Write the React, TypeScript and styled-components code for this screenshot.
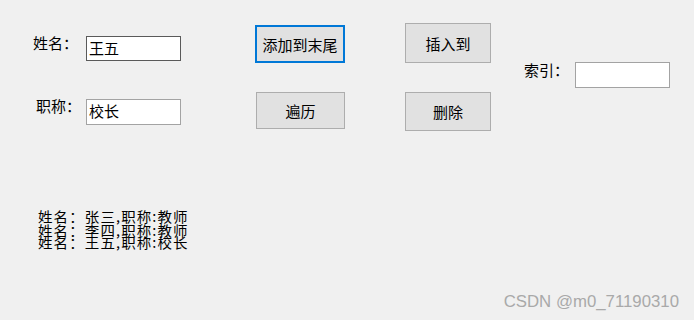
import React from 'react'
import styled, { createGlobalStyle, css } from 'styled-components'

const GlobalStyle = createGlobalStyle`
  html, body {
    margin: 0;
    padding: 0;
    background: #f0f0f0;
  }
  body {
    font-family: "Noto Sans CJK SC", "Noto Sans", sans-serif;
    color: #000;
  }
`

const Form = styled.div`
  width: 694px;
  height: 320px;
  display: flex;
  flex-direction: column;
  background: #f0f0f0;
  overflow: hidden;
`

const Controls = styled.div`
  display: grid;
  grid-template-columns: 53px 95px 74px 90px 60px 86px 33px 51px 95px;
  grid-template-rows: 40px 29px 40px;
  padding: 23px 0 0 33px;
`

type Cell = { $col: number; $row: string; $top?: number; $left?: number }

const place = css<Cell>`
  grid-column: ${p => p.$col};
  grid-row: ${p => p.$row};
  align-self: start;
  margin-top: ${p => p.$top ?? 0}px;
  margin-left: ${p => p.$left ?? 0}px;
`

const Label = styled.span<Cell>`
  ${place}
  font-size: 15px;
  line-height: 20px;
  white-space: nowrap;
`

const TextBox = styled.div<Cell & { $focused?: boolean; $h: number }>`
  ${place}
  box-sizing: border-box;
  width: 95px;
  height: ${p => p.$h}px;
  background: #fff;
  border: 1px solid ${p => (p.$focused ? '#5a5a5a' : '#a3a3a3')};
  font-size: 15px;
  line-height: 22px;
  padding-left: 2px;
`

const Button = styled.div<Cell & { $focused?: boolean; $w: number; $h: number }>`
  ${place}
  box-sizing: border-box;
  width: ${p => p.$w}px;
  height: ${p => p.$h}px;
  display: flex;
  align-items: center;
  justify-content: center;
  background: #e1e1e1;
  border: ${p => (p.$focused ? '2px solid #0078d7' : '1px solid #adadad')};
  font-size: 15px;
  white-space: nowrap;
`

const Output = styled.div`
  margin: 78px 0 0 38px;
  font-size: 14.5px;
  line-height: 13.5px;
  letter-spacing: 1.1px;
  white-space: pre;
  transform: scaleY(0.95);
  transform-origin: top left;
`

const Footer = styled.div`
  margin-top: auto;
  padding: 0 15px 8px 0;
  text-align: right;
  font-family: "Liberation Sans", Arial, sans-serif;
  font-size: 16.8px;
  line-height: 20px;
  color: #a9a9a9;
`

const staff = [
  { name: '张三', title: '教师' },
  { name: '李四', title: '教师' },
  { name: '王五', title: '校长' },
]

export default function App() {
  return (
    <Form>
      <GlobalStyle />
      <Controls>
        <Label $col={1} $row="1" $top={10}>姓名：</Label>
        <TextBox $col={2} $row="1" $top={13} $h={25} $focused>王五</TextBox>
        <Button $col={4} $row="1" $top={2} $w={90} $h={38} $focused>添加到末尾</Button>
        <Button $col={6} $row="1" $w={86} $h={40}>插入到</Button>
        <Label $col={8} $row="1 / 4" $top={37}>索引：</Label>
        <TextBox $col={9} $row="1 / 4" $top={39} $h={26} />

        <Label $col={1} $row="3" $top={4} $left={3}>职称：</Label>
        <TextBox $col={2} $row="3" $top={7} $h={26}>校长</TextBox>
        <Button $col={4} $row="3" $left={1} $w={89} $h={37}>遍历</Button>
        <Button $col={6} $row="3" $w={86} $h={39}>删除</Button>
      </Controls>

      <Output>
        {staff.map(s => `姓名：${s.name},职称:${s.title}`).join('\n')}
      </Output>

      <Footer>CSDN @m0_71190310</Footer>
    </Form>
  )
}
